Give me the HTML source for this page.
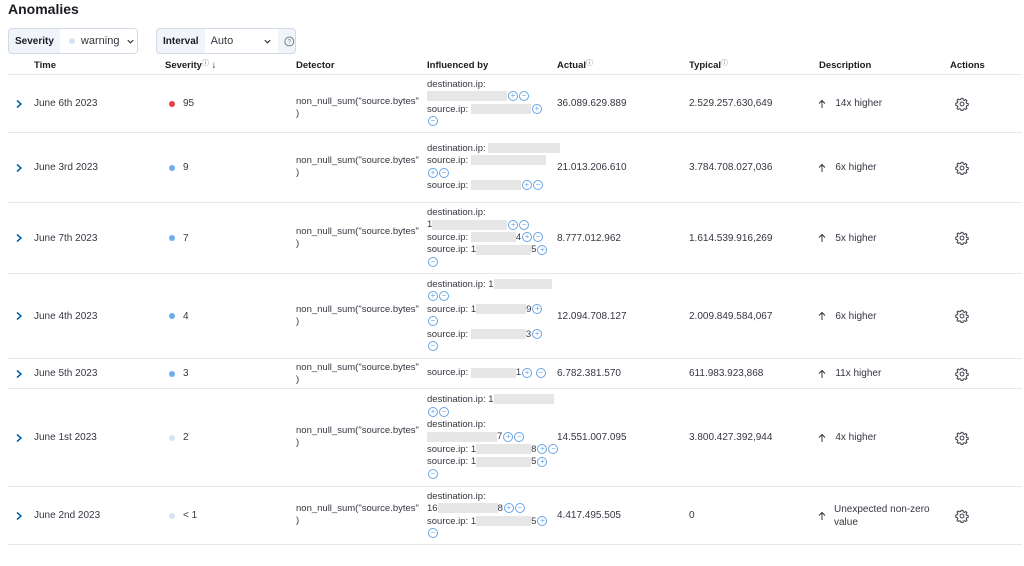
<!DOCTYPE html><html><head><style>
body{margin:0;width:1024px;height:566px;background:#fff;font-family:"Liberation Sans",sans-serif;color:#343741;font-size:10px;position:relative;overflow:hidden}
h1{position:absolute;left:8px;top:1px;margin:0;font-size:14px;font-weight:bold;color:#1a1c21}
.grp{position:absolute;top:28px;height:24px;border:1px solid #d3dae6;border-radius:4px;background:#f1f4fa;display:flex;align-items:center;font-size:10px;overflow:hidden}
.lbl{font-weight:bold;padding:0 6px;color:#1a1c21}
.val{background:#fff;height:24px;display:flex;align-items:center}
.hd{position:absolute;top:60px;font-weight:bold;font-size:9.5px;color:#1a1c21;white-space:nowrap}
.hd i{font-style:normal;font-weight:normal;font-size:7px;color:#69707d;position:relative;top:-3px}
.line{position:absolute;left:8px;width:1014px;height:1px;background:#e3e8f0}
.row{position:absolute;left:0;width:1024px;display:flex;align-items:center}
.c{position:absolute;display:flex;align-items:center;height:100%}
.dot{width:6px;height:6px;border-radius:50%;display:inline-block;margin-right:8px}
.inf{line-height:12.5px;font-size:9.5px}
.bl{display:inline-block;height:10px;background:#e6e6e6;vertical-align:middle}
.ic{display:inline-block;width:8px;height:8px;border:1px solid #69a4e6;border-radius:50%;color:#69a4e6;font-size:8px;line-height:8px;text-align:center;vertical-align:middle;margin-left:1px}
.det{line-height:12px;font-size:9.5px;align-items:flex-start}
</style></head><body>
<svg width="0" height="0" style="position:absolute"><defs>
<symbol id="chev" viewBox="0 0 10 10"><path d="M3 1.5 L7 5 L3 8.5" fill="none" stroke="#0061a6" stroke-width="1.5"/></symbol>
<symbol id="gear" viewBox="0 0 16 16"><g fill="none" stroke="#343741" stroke-width="1.1"><circle cx="8" cy="8" r="2.2"/><path d="M7 1.5h2l.4 1.8 1.3.6 1.6-1 1.4 1.4-1 1.6.6 1.3 1.8.4v2l-1.8.4-.6 1.3 1 1.6-1.4 1.4-1.6-1-1.3.6-.4 1.8H7l-.4-1.8-1.3-.6-1.6 1-1.4-1.4 1-1.6-.6-1.3-1.8-.4V7l1.8-.4.6-1.3-1-1.6 1.4-1.4 1.6 1 1.3-.6z"/></g></symbol>
<symbol id="up" viewBox="0 0 10 10"><path d="M5 9V1.5M2 4.5L5 1.5 8 4.5" fill="none" stroke="#343741" stroke-width="1"/></symbol>
</defs></svg>
<h1>Anomalies</h1>
<div class="grp" style="left:8px;width:128px"><span class="lbl">Severity</span><span class="val" style="flex:1;padding-left:9px;font-size:11px"><span class="dot" style="background:#d6e2ef;margin-right:6px"></span>warning&nbsp;&nbsp;<svg width="9" height="9" viewBox="0 0 10 10"><path d="M2 3.5L5 6.5 8 3.5" fill="none" stroke="#343741" stroke-width="1.3"/></svg></span></div>
<div class="grp" style="left:156px;width:138px"><span class="lbl">Interval</span><span class="val" style="width:70px;padding-left:6px;font-size:11px">Auto<svg style="margin-left:30px" width="9" height="9" viewBox="0 0 10 10"><path d="M2 3.5L5 6.5 8 3.5" fill="none" stroke="#343741" stroke-width="1.3"/></svg></span><svg style="margin-left:6px" width="11" height="11" viewBox="0 0 12 12"><circle cx="6" cy="6" r="5" fill="none" stroke="#69707d"/><text x="6" y="8.5" font-size="7" text-anchor="middle" fill="#69707d" font-family="Liberation Sans">?</text></svg></div>
<div class="hd" style="left:34px">Time</div>
<div class="hd" style="left:165px">Severity<i>ⓘ</i> ↓</div>
<div class="hd" style="left:296px">Detector</div>
<div class="hd" style="left:427px">Influenced by</div>
<div class="hd" style="left:557px">Actual<i>ⓘ</i></div>
<div class="hd" style="left:689px">Typical<i>ⓘ</i></div>
<div class="hd" style="left:819px">Description</div>
<div class="hd" style="left:950px">Actions</div>
<div class="line" style="top:74px"></div>
<div class="line" style="top:132px"></div>
<div class="line" style="top:202px"></div>
<div class="line" style="top:273px"></div>
<div class="line" style="top:358px"></div>
<div class="line" style="top:388px"></div>
<div class="line" style="top:486px"></div>
<div class="line" style="top:544px"></div>

<div class="row" style="top:75px;height:57px">
<div class="c" style="left:14px"><svg width="10" height="10"><use href="#chev"/></svg></div><div class="c" style="left:34px">June 6th 2023</div>
<div class="c" style="left:169px"><span class="dot" style="background:#e7404a"></span>95</div>
<div class="c det" style="left:296px;top:21px">non_null_sum("source.bytes"<br>)</div>
<div class="c inf" style="left:427px"><div>destination.ip:<br><span class="bl" style="width:80px"></span><span class="ic">+</span><span class="ic">−</span><br>source.ip: <span class="bl" style="width:60px"></span><span class="ic">+</span><br><span class="ic">−</span></div></div>
<div class="c" style="left:557px">36.089.629.889</div><div class="c" style="left:689px">2.529.257.630,649</div>
<div class="c" style="left:817px"><svg width="10" height="10"><use href="#up"/></svg>&nbsp;&nbsp; 14x higher</div><div class="c" style="left:955px"><svg width="14" height="14"><use href="#gear"/></svg></div></div>

<div class="row" style="top:133px;height:69px">
<div class="c" style="left:14px"><svg width="10" height="10"><use href="#chev"/></svg></div><div class="c" style="left:34px">June 3rd 2023</div>
<div class="c" style="left:169px"><span class="dot" style="background:#6dadea"></span>9</div>
<div class="c det" style="left:296px;top:22px">non_null_sum("source.bytes"<br>)</div>
<div class="c inf" style="left:427px"><div>destination.ip: <span class="bl" style="width:72px"></span><br>source.ip: <span class="bl" style="width:75px"></span><br><span class="ic">+</span><span class="ic">−</span><br>source.ip: <span class="bl" style="width:50px"></span><span class="ic">+</span><span class="ic">−</span></div></div>
<div class="c" style="left:557px">21.013.206.610</div><div class="c" style="left:689px">3.784.708.027,036</div>
<div class="c" style="left:817px"><svg width="10" height="10"><use href="#up"/></svg>&nbsp;&nbsp; 6x higher</div><div class="c" style="left:955px"><svg width="14" height="14"><use href="#gear"/></svg></div></div>

<div class="row" style="top:203px;height:70px">
<div class="c" style="left:14px"><svg width="10" height="10"><use href="#chev"/></svg></div><div class="c" style="left:34px">June 7th 2023</div>
<div class="c" style="left:169px"><span class="dot" style="background:#6dadea"></span>7</div>
<div class="c det" style="left:296px;top:23px">non_null_sum("source.bytes"<br>)</div>
<div class="c inf" style="left:427px"><div>destination.ip:<br>1<span class="bl" style="width:75px"></span><span class="ic">+</span><span class="ic">−</span><br>source.ip: <span class="bl" style="width:45px"></span>4<span class="ic">+</span><span class="ic">−</span><br>source.ip: 1<span class="bl" style="width:55px"></span>5<span class="ic">+</span><br><span class="ic">−</span></div></div>
<div class="c" style="left:557px">8.777.012.962</div><div class="c" style="left:689px">1.614.539.916,269</div>
<div class="c" style="left:817px"><svg width="10" height="10"><use href="#up"/></svg>&nbsp;&nbsp; 5x higher</div><div class="c" style="left:955px"><svg width="14" height="14"><use href="#gear"/></svg></div></div>

<div class="row" style="top:274px;height:84px">
<div class="c" style="left:14px"><svg width="10" height="10"><use href="#chev"/></svg></div><div class="c" style="left:34px">June 4th 2023</div>
<div class="c" style="left:169px"><span class="dot" style="background:#6dadea"></span>4</div>
<div class="c det" style="left:296px;top:30px">non_null_sum("source.bytes"<br>)</div>
<div class="c inf" style="left:427px"><div>destination.ip: 1<span class="bl" style="width:58px"></span><br><span class="ic">+</span><span class="ic">−</span><br>source.ip: 1<span class="bl" style="width:50px"></span>9<span class="ic">+</span><br><span class="ic">−</span><br>source.ip: <span class="bl" style="width:55px"></span>3<span class="ic">+</span><br><span class="ic">−</span></div></div>
<div class="c" style="left:557px">12.094.708.127</div><div class="c" style="left:689px">2.009.849.584,067</div>
<div class="c" style="left:817px"><svg width="10" height="10"><use href="#up"/></svg>&nbsp;&nbsp; 6x higher</div><div class="c" style="left:955px"><svg width="14" height="14"><use href="#gear"/></svg></div></div>

<div class="row" style="top:359px;height:29px">
<div class="c" style="left:14px"><svg width="10" height="10"><use href="#chev"/></svg></div><div class="c" style="left:34px">June 5th 2023</div>
<div class="c" style="left:169px"><span class="dot" style="background:#6dadea"></span>3</div>
<div class="c det" style="left:296px;top:3px">non_null_sum("source.bytes"<br>)</div>
<div class="c inf" style="left:427px"><div>source.ip: <span class="bl" style="width:45px"></span>1<span class="ic">+</span> <span class="ic">−</span></div></div>
<div class="c" style="left:557px">6.782.381.570</div><div class="c" style="left:689px">611.983.923,868</div>
<div class="c" style="left:817px"><svg width="10" height="10"><use href="#up"/></svg>&nbsp;&nbsp; 11x higher</div><div class="c" style="left:955px"><svg width="14" height="14"><use href="#gear"/></svg></div></div>

<div class="row" style="top:389px;height:97px">
<div class="c" style="left:14px"><svg width="10" height="10"><use href="#chev"/></svg></div><div class="c" style="left:34px">June 1st 2023</div>
<div class="c" style="left:169px"><span class="dot" style="background:#d6e2ef"></span>2</div>
<div class="c det" style="left:296px;top:36px">non_null_sum("source.bytes"<br>)</div>
<div class="c inf" style="left:427px"><div>destination.ip: 1<span class="bl" style="width:60px"></span><br><span class="ic">+</span><span class="ic">−</span><br>destination.ip:<br><span class="bl" style="width:70px"></span>7<span class="ic">+</span><span class="ic">−</span><br>source.ip: 1<span class="bl" style="width:55px"></span>8<span class="ic">+</span><span class="ic">−</span><br>source.ip: 1<span class="bl" style="width:55px"></span>5<span class="ic">+</span><br><span class="ic">−</span></div></div>
<div class="c" style="left:557px">14.551.007.095</div><div class="c" style="left:689px">3.800.427.392,944</div>
<div class="c" style="left:817px"><svg width="10" height="10"><use href="#up"/></svg>&nbsp;&nbsp; 4x higher</div><div class="c" style="left:955px"><svg width="14" height="14"><use href="#gear"/></svg></div></div>

<div class="row" style="top:487px;height:57px">
<div class="c" style="left:14px"><svg width="10" height="10"><use href="#chev"/></svg></div><div class="c" style="left:34px">June 2nd 2023</div>
<div class="c" style="left:169px"><span class="dot" style="background:#d6e2ef"></span>&lt; 1</div>
<div class="c det" style="left:296px;top:16px">non_null_sum("source.bytes"<br>)</div>
<div class="c inf" style="left:427px"><div>destination.ip:<br>16<span class="bl" style="width:60px"></span>8<span class="ic">+</span><span class="ic">−</span><br>source.ip: 1<span class="bl" style="width:55px"></span>5<span class="ic">+</span><br><span class="ic">−</span></div></div>
<div class="c" style="left:557px">4.417.495.505</div><div class="c" style="left:689px">0</div>
<div class="c" style="left:817px"><svg width="10" height="10"><use href="#up"/></svg><span style="margin-left:7px;line-height:13px">Unexpected non-zero<br>value</span></div><div class="c" style="left:955px"><svg width="14" height="14"><use href="#gear"/></svg></div></div>
</body></html>
